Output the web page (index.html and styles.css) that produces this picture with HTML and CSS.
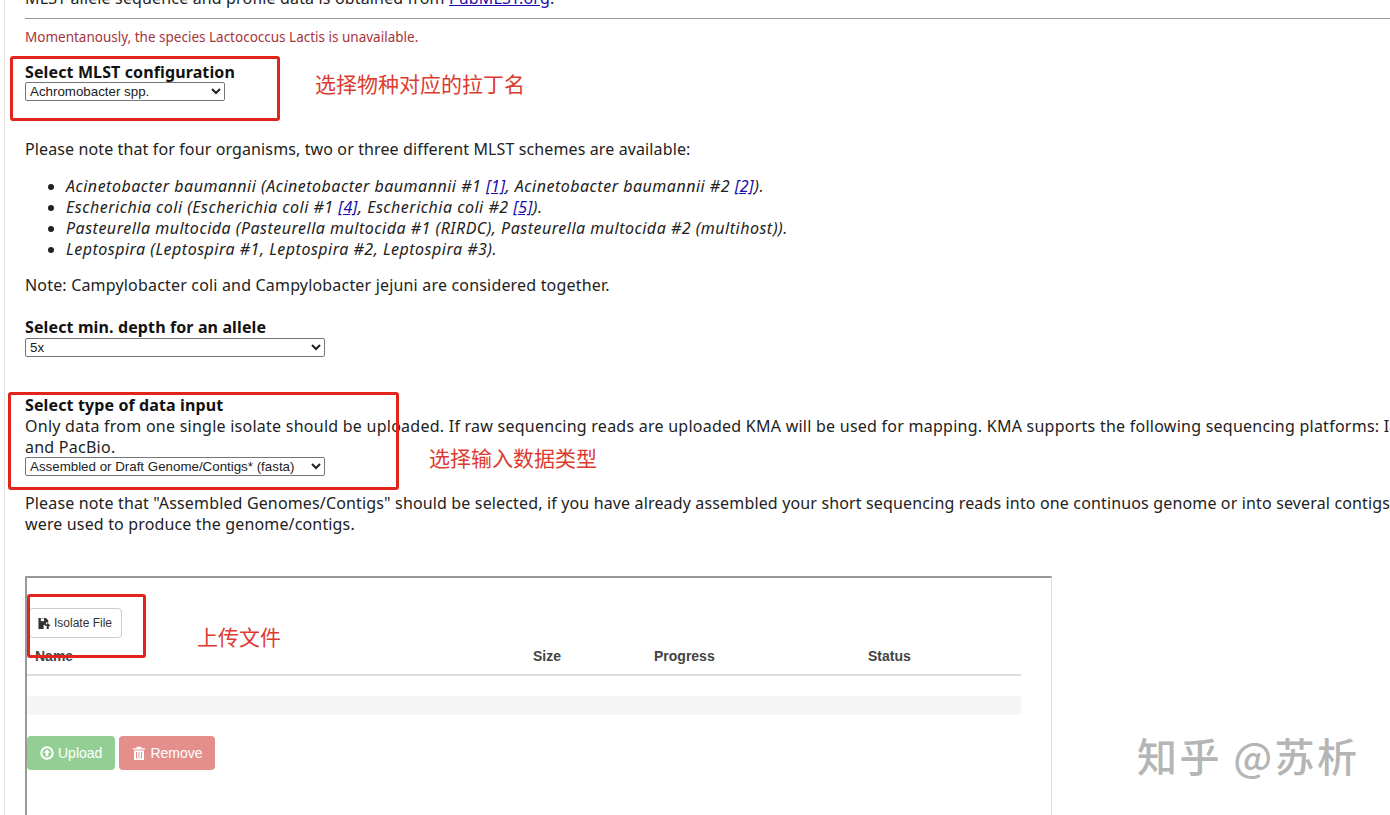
FILE: index.html
```html
<!DOCTYPE html>
<html lang="en">

<head>
  <meta charset="UTF-8">
  <meta name="viewport" content="width=device-width, initial-scale=1.0">
  <title>MLST</title>
  <link rel="stylesheet" href="styles.css">
</head>

<body>
  <div class="page">
    <p class="intro">MLST allele sequence and profile data is obtained from <a href="#">PubMLST.org</a>.</p>
    <hr class="rule">
    <p class="warning">Momentanously, the species Lactococcus Lactis is unavailable.</p>

    <div class="field field-mlst">
      <div class="label">Select MLST configuration</div>
      <select class="select select-mlst">
        <option>Achromobacter spp.</option>
      </select>
    </div>

    <p class="note-schemes">Please note that for four organisms, two or three different MLST schemes are available:</p>
    <ul class="schemes">
      <li>Acinetobacter baumannii (Acinetobacter baumannii #1 <a href="#">[1]</a>, Acinetobacter baumannii #2 <a href="#">[2]</a>).</li>
      <li>Escherichia coli (Escherichia coli #1 <a href="#">[4]</a>, Escherichia coli #2 <a href="#">[5]</a>).</li>
      <li>Pasteurella multocida (Pasteurella multocida #1 (RIRDC), Pasteurella multocida #2 (multihost)).</li>
      <li>Leptospira (Leptospira #1, Leptospira #2, Leptospira #3).</li>
    </ul>
    <p class="note-campy">Note: Campylobacter coli and Campylobacter jejuni are considered together.</p>

    <div class="field field-depth">
      <div class="label">Select min. depth for an allele</div>
      <select class="select select-wide">
        <option>5x</option>
      </select>
    </div>

    <div class="field field-input">
      <div class="label">Select type of data input</div>
      <div class="input-help">Only data from one single isolate should be uploaded. If raw sequencing reads are uploaded KMA will be used for mapping. KMA supports the following sequencing platforms: Illumina, Ion Torrent, Oxford Nanopore<br>and PacBio.</div>
      <select class="select select-wide select-type">
        <option>Assembled or Draft Genome/Contigs* (fasta)</option>
      </select>
    </div>

    <p class="note-assembled">Please note that "Assembled Genomes/Contigs" should be selected, if you have already assembled your short sequencing reads into one continuos genome or into several contigs before uploading. State which platforms<br>were used to produce the genome/contigs.</p>

    <div class="uploader">
      <button class="btn-file">
        <svg class="icon-file" viewBox="0 0 14 14"><path d="M0.5 1h8l2.5 2.5V6H8.5v2.5H6V13H0.5z" fill="#333"/><rect x="3" y="1.5" width="3.5" height="3" fill="#fff"/><path d="M10.5 6.5l3.2 3.2h-2.1V13H9.4V9.7H7.3z" fill="#333"/></svg>
        Isolate File
      </button>
      <div class="file-head">
        <span class="col-name">Name</span>
        <span class="col-size">Size</span>
        <span class="col-progress">Progress</span>
        <span class="col-status">Status</span>
      </div>
      <div class="progress-track"></div>
      <div class="actions">
        <button class="btn btn-upload">
          <svg class="icon" viewBox="0 0 14 14"><circle cx="7" cy="7" r="5.7" fill="none" stroke="#fff" stroke-width="2"/><path d="M7 3.3l3.2 3.4H8.3v3.6H5.7V6.7H3.8z" fill="#fff"/></svg>
          Upload
        </button>
        <button class="btn btn-remove">
          <svg class="icon" viewBox="0 0 14 14"><path d="M5 0.8h4l.7 1.4H13v1.3H1V2.2h3.3zM2 4.5h10V14H2zM4 6v6.5h1V6zM6.5 6v6.5h1V6zM9 6v6.5h1V6z" fill="#fff" fill-rule="evenodd"/></svg>
          Remove
        </button>
      </div>
    </div>
  </div>

  <!-- red annotations on top of the screenshot -->
  <div class="mark mark-mlst"></div>
  <div class="mark mark-input"></div>
  <div class="mark mark-file"></div>
  <div class="note note-mlst">选择物种对应的拉丁名</div>
  <div class="note note-input">选择输入数据类型</div>
  <div class="note note-file">上传文件</div>
  <div class="watermark">知乎 @苏析</div>
</body>

</html>
```

FILE: styles.css
```css
html,
body {
  margin: 0;
  height: 815px;
  overflow: hidden;
  background-color: #fff;
}

body {
  position: relative;
  font-family: "Noto Sans", "Open Sans", sans-serif;
  font-size: 16px;
  line-height: 21px;
  letter-spacing: 0.18px;
  color: #222;
}

a {
  color: #1a0dab;
}

p {
  margin: 0;
}

.page {
  width: 2000px;
  height: 840px;
  margin-left: 4px;
  margin-top: -12px;
  padding-left: 20px;
  border-left: 1px solid #e4e4e4;
}

.intro {
  letter-spacing: 0.15px;
}

.rule {
  margin: 9px 0 0;
  border: 0;
  border-top: 1px solid #999;
}

.warning {
  margin-top: 8px;
  font-size: 13.5px;
  letter-spacing: 0;
  color: #a5343c;
}

.label {
  font-weight: 700;
  letter-spacing: 0.12px;
  color: #111;
}

.field-mlst {
  margin-top: 14px;
}

.select {
  display: block;
  height: 19px;
  padding: 0;
  border: 1px solid #767676;
  border-radius: 2px;
  background-color: #fff;
  font-family: "Liberation Sans", Arial, sans-serif;
  font-size: 13.33px;
  letter-spacing: 0;
  color: #222;
}

.select-mlst {
  width: 200px;
  margin-top: -1px;
}

.select-wide {
  width: 300px;
}

.select-type {
  margin-top: -1px;
}

.note-schemes {
  margin-top: 38px;
  letter-spacing: 0.12px;
}

.schemes {
  margin: 16px 0 0;
  padding-left: 41px;
  font-style: italic;
  letter-spacing: 0.5px;
}

.note-campy {
  margin-top: 15px;
}

.field-depth {
  margin-top: 21px;
}

.field-input {
  margin-top: 38px;
}

.input-help {
  letter-spacing: 0.25px;
}

.note-assembled {
  margin-top: 17px;
  letter-spacing: 0.15px;
}

.uploader {
  box-sizing: border-box;
  width: 1027px;
  height: 300px;
  margin-top: 41px;
  padding: 30px 0 0;
  border: 2px solid #999;
  border-bottom: 0;
  border-right: 1px solid #ddd;
  font-family: "Liberation Sans", Arial, sans-serif;
  font-size: 12px;
  letter-spacing: 0;
}

.btn-file {
  display: flex;
  align-items: center;
  gap: 3px;
  height: 30px;
  width: 93px;
  margin-left: 2px;
  padding: 0 0 0 8px;
  border: 1px solid #ccc;
  border-radius: 4px;
  background-color: #fff;
  font-family: inherit;
  font-size: 12px;
  color: #333;
}

.icon-file {
  width: 13px;
  height: 13px;
}

.file-head {
  display: grid;
  grid-template-columns: 498px 121px 214px 1fr;
  width: 994px;
  height: 34px;
  margin-top: 4px;
  padding-left: 8px;
  box-sizing: border-box;
  border-bottom: 2px solid #ddd;
  font-size: 14px;
  line-height: 28px;
  font-weight: 700;
  color: #444;
}

.progress-track {
  width: 994px;
  height: 19px;
  margin-top: 20px;
  border-radius: 4px;
  background-color: #f5f5f5;
}

.actions {
  display: flex;
  gap: 4px;
  margin-top: 21px;
}

.btn {
  display: flex;
  align-items: center;
  gap: 4px;
  height: 34px;
  padding: 0 13px;
  border: 0;
  border-radius: 4px;
  font-family: inherit;
  font-size: 14px;
  color: #fff;
}

.icon {
  width: 14px;
  height: 14px;
}

.btn-upload {
  background-color: #93cf95;
}

.btn-remove {
  padding-right: 12px;
  background-color: #e58f8d;
}

.mark {
  position: absolute;
  box-sizing: border-box;
  border: 3px solid #e1251b;
  border-radius: 3px;
}

.mark-mlst {
  left: 10px;
  top: 56px;
  width: 270px;
  height: 65px;
}

.mark-input {
  left: 8px;
  top: 392px;
  width: 391px;
  height: 98px;
}

.mark-file {
  left: 27px;
  top: 594px;
  width: 119px;
  height: 64px;
}

.note {
  position: absolute;
  font-family: "Noto Sans CJK SC", sans-serif;
  font-size: 21px;
  line-height: 28px;
  letter-spacing: 0;
  color: #dc3b30;
}

.note-mlst {
  left: 315px;
  top: 69px;
}

.note-input {
  left: 429px;
  top: 443px;
}

.note-file {
  left: 197px;
  top: 622px;
}

.watermark {
  position: absolute;
  left: 1137px;
  top: 730px;
  font-family: "Noto Sans CJK SC", sans-serif;
  font-size: 40px;
  font-weight: 500;
  line-height: 50px;
  letter-spacing: 2.4px;
  color: #b5b5b5;
  white-space: nowrap;
}
```
